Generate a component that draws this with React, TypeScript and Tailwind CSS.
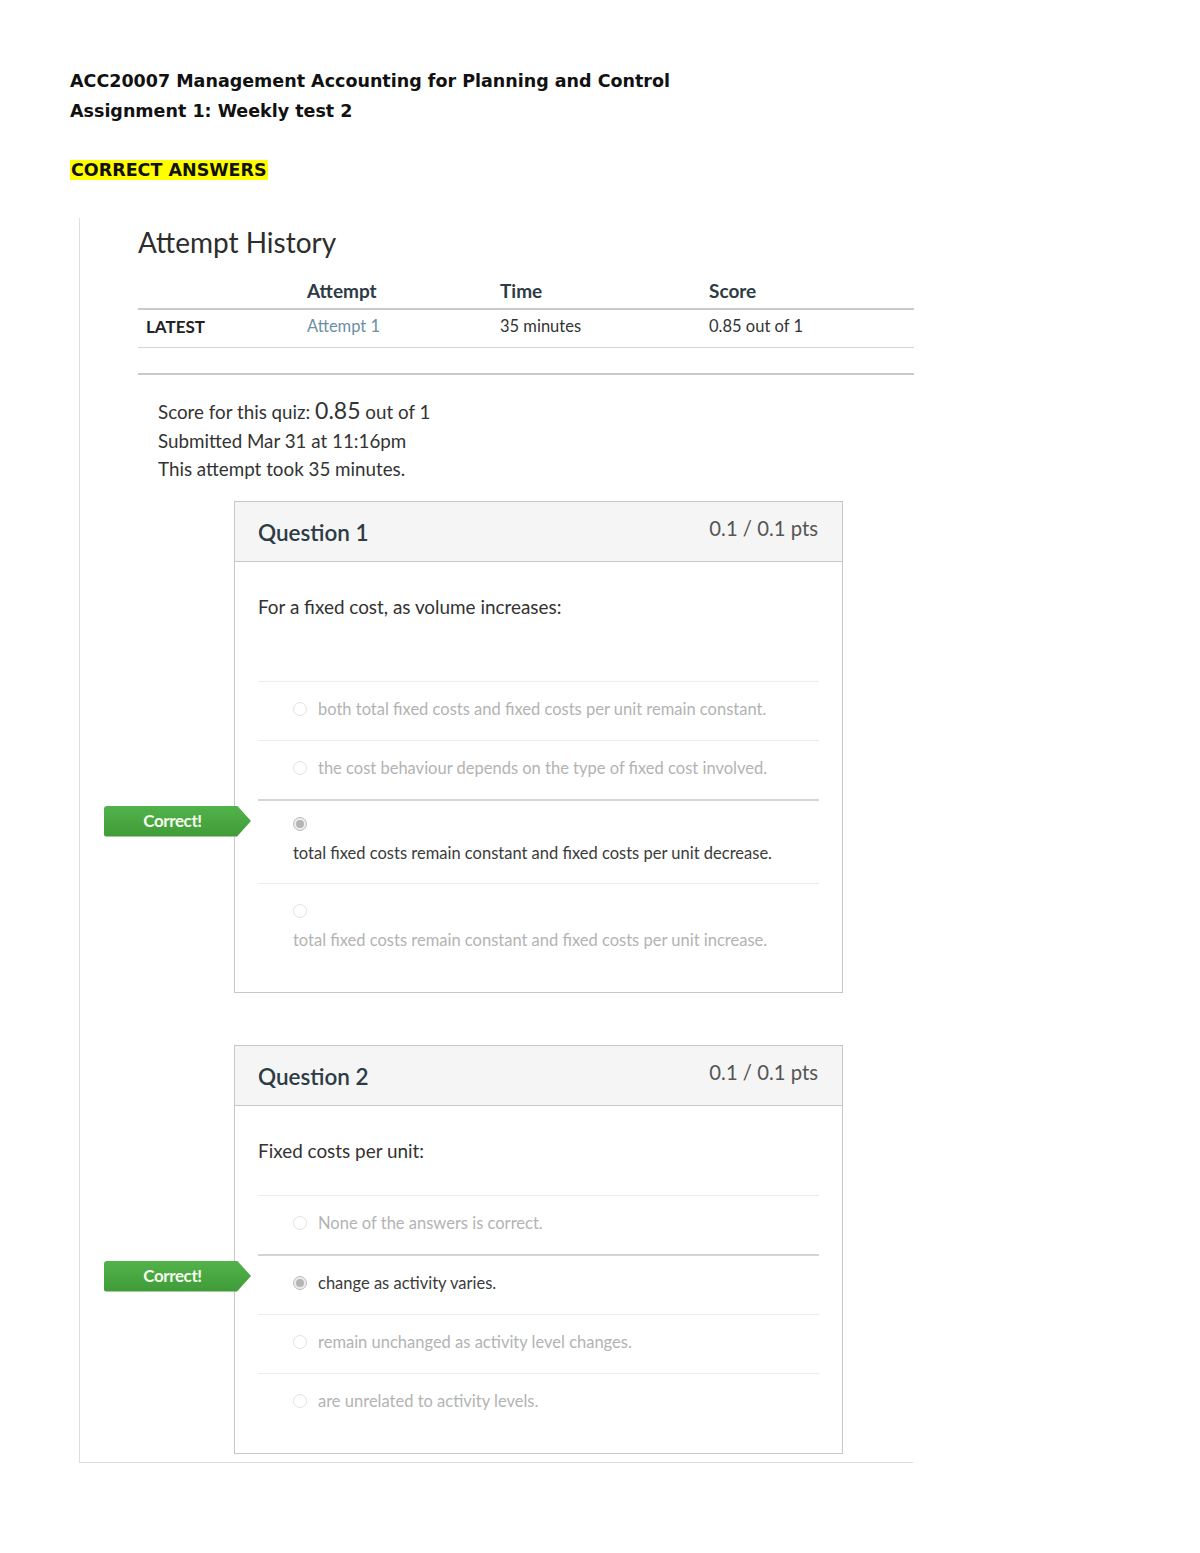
// Quiz results page: heading of the document, attempt history table and two graded questions

type Answer = { text: string; selected?: boolean; stacked?: boolean };

type Question = {
  title: string;
  pts: string;
  prompt: string;
  promptGap: string;
  answers: Answer[];
};

const questions: Question[] = [
  {
    title: 'Question 1',
    pts: '0.1 / 0.1 pts',
    prompt: 'For a fixed cost, as volume increases:',
    promptGap: 'mt-[62px]',
    answers: [
      { text: 'both total fixed costs and fixed costs per unit remain constant.' },
      { text: 'the cost behaviour depends on the type of fixed cost involved.' },
      { text: 'total fixed costs remain constant and fixed costs per unit decrease.', selected: true, stacked: true },
      { text: 'total fixed costs remain constant and fixed costs per unit increase.', stacked: true },
    ],
  },
  {
    title: 'Question 2',
    pts: '0.1 / 0.1 pts',
    prompt: 'Fixed costs per unit:',
    promptGap: 'mt-[32px]',
    answers: [
      { text: 'None of the answers is correct.' },
      { text: 'change as activity varies.', selected: true },
      { text: 'remain unchanged as activity level changes.' },
      { text: 'are unrelated to activity levels.' },
    ],
  },
];

function Radio({ selected }: { selected?: boolean }) {
  return (
    <span
      className={`flex h-[14px] w-[14px] shrink-0 items-center justify-center rounded-full border ${
        selected ? 'border-[#bdbdbd] bg-[#ececec]' : 'border-[#e2e2e2] bg-white'
      }`}
    >
      {selected && <span className="h-[8px] w-[8px] rounded-full bg-[#b5b5b5]" />}
    </span>
  );
}

function CorrectTag() {
  return (
    <div className="absolute left-[-154px] top-[5px] flex h-[31px] w-[147px] items-center rounded-l-[3px] bg-gradient-to-b from-[#52b34a] to-[#3f9b39] pr-[14px] [clip-path:polygon(0_0,calc(100%_-_14px)_0,100%_50%,calc(100%_-_14px)_100%,0_100%)]">
      <span className="w-full pl-[4px] text-center text-[17px] font-bold tracking-[-0.4px] text-[#f6fcee]">
        Correct!
      </span>
    </div>
  );
}

function AnswerRow({ answer, index }: { answer: Answer; index: number }) {
  const border = answer.selected ? 'border-t-2 border-[#d4d4d4]' : 'border-t border-[#ececec]';
  const tone = answer.selected ? 'text-[#3b3b3b]' : 'text-[#b3b3b3]';
  const last = index === 3;

  if (answer.stacked) {
    return (
      <div className={`relative ${border} pl-[35px] ${last ? 'pt-[20px] pb-[40px]' : 'pt-[16px] pb-[18px]'}`}>
        {answer.selected && <CorrectTag />}
        <Radio selected={answer.selected} />
        <p className={`mt-[10px] text-[16.5px] leading-6 ${tone}`}>{answer.text}</p>
      </div>
    );
  }

  return (
    <div className={`relative ${border} pl-[35px] pt-[15px] ${last ? 'pb-[40px]' : 'pb-[19px]'}`}>
      {answer.selected && <CorrectTag />}
      <div className="flex items-center gap-[11px]">
        <Radio selected={answer.selected} />
        <p className={`text-[16.5px] leading-6 ${tone}`}>{answer.text}</p>
      </div>
    </div>
  );
}

function QuestionCard({ q }: { q: Question }) {
  return (
    <div className="ml-[154px] w-[609px] border border-[#c7c7c7] bg-white">
      <div className="flex h-[60px] justify-between border-b border-[#c7c7c7] bg-[#f5f5f5] pl-[23px] pr-[24px]">
        <h3 className="pt-[17px] text-[22.5px] font-semibold leading-[28px] text-[#2d3b45]">{q.title}</h3>
        <span className="pt-[12px] text-[20.3px] leading-[28px] text-[#555]">{q.pts}</span>
      </div>
      <div className="px-[23px] pt-[33px]">
        <p className="text-[18.9px] leading-6 text-[#333]">{q.prompt}</p>
        <div className={q.promptGap}>
          {q.answers.map((a, i) => (
            <AnswerRow key={i} answer={a} index={i} />
          ))}
        </div>
      </div>
    </div>
  );
}

export default function App() {
  return (
    <div className="h-[1553px] w-[1200px] bg-white">
      {/* document heading */}
      <div className="pl-[70px] pt-[66px] font-['DejaVu_Sans',sans-serif] text-[17.5px] font-bold leading-[30px] text-[#111]">
        <p>ACC20007 Management Accounting for Planning and Control</p>
        <p>Assignment 1: Weekly test 2</p>
        <p className="mt-[33px] leading-[22px]">
          <span className="bg-[#ffff00] px-px">CORRECT ANSWERS</span>
        </p>
      </div>

      {/* pasted canvas screenshot */}
      <div className="ml-[79px] mt-[37px] w-[834px] border-b border-l border-[#dedede] pb-[8px] pt-[7px] font-['Lato',sans-serif]">
        <h2 className="pl-[58px] text-[28px] font-normal leading-[34px] text-[#2d2d2d]">Attempt History</h2>

        <div className="ml-[58px] mt-[15px] w-[776px]">
          <div className="grid h-[36px] grid-cols-[169px_193px_209px_1fr] items-center border-b-2 border-[#c9c9c9] text-[19px] font-bold text-[#2d3b45]">
            <span />
            <span>Attempt</span>
            <span>Time</span>
            <span>Score</span>
          </div>
          <div className="grid h-[38px] grid-cols-[169px_193px_209px_1fr] items-center border-b border-[#d4d4d4] pb-[4px] text-[16.5px] text-[#333]">
            <span className="pl-[8px] text-[17px] font-bold text-[#222]">LATEST</span>
            <span className="text-[#6e8fa3]">Attempt 1</span>
            <span>35 minutes</span>
            <span>0.85 out of 1</span>
          </div>
          <div className="mt-[25px] border-b-2 border-[#c9c9c9]" />
        </div>

        <div className="mt-[21px] pl-[78px] text-[18.8px] leading-[28.5px] text-[#333]">
          <p>
            Score for this quiz: <span className="text-[23px]">0.85</span> out of 1
          </p>
          <p>Submitted Mar 31 at 11:16pm</p>
          <p>This attempt took 35 minutes.</p>
        </div>

        <div className="mt-[17px] flex flex-col gap-[52px]">
          {questions.map((q) => (
            <QuestionCard key={q.title} q={q} />
          ))}
        </div>
      </div>
    </div>
  );
}
